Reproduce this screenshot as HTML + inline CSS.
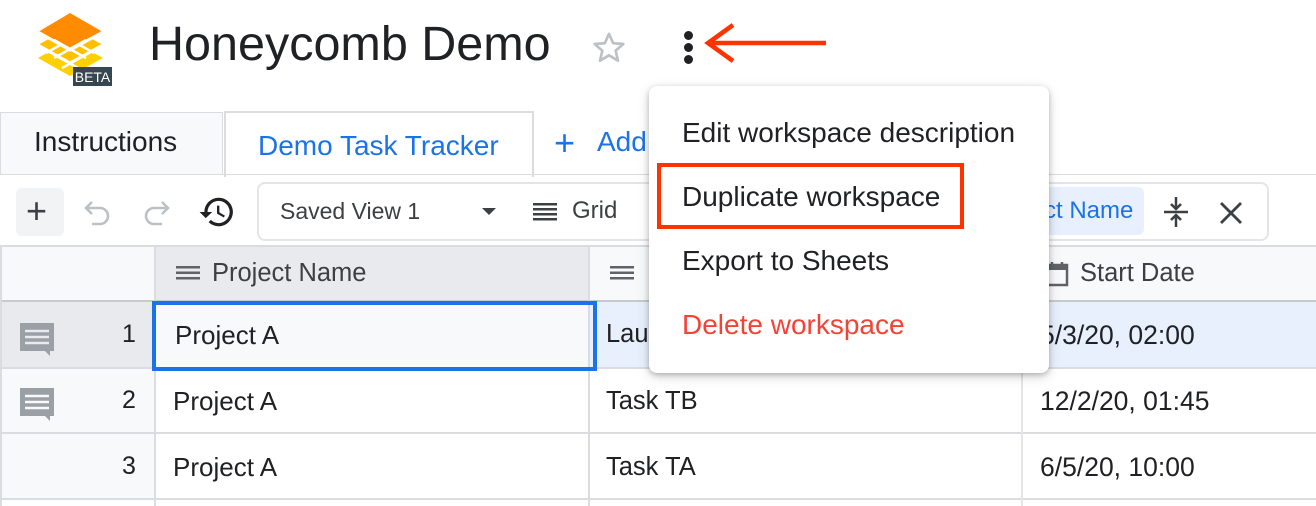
<!DOCTYPE html>
<html><head><style>
*{box-sizing:border-box;margin:0;padding:0}
body{width:1316px;height:506px;overflow:hidden;background:#fff;font-family:"Liberation Sans",Roboto,sans-serif;color:#202124;position:relative}
.a{position:absolute}
.t{white-space:nowrap}
</style></head><body>
<!-- logo -->
<svg class="a" style="left:0;top:0" width="120" height="92" viewBox="0 0 120 92">
<polygon points="38,58 70,40 103,58 70,76" fill="#ffd000"/>
<polygon points="38,45 70,27 103,45 70,63" fill="#ffc000"/>
<polygon points="38,32 70,13 103,32 70,50" fill="#ff8c00"/>
<path d="M38,32 L70,50 L103,32" fill="none" stroke="#fff" stroke-width="3"/>
<path d="M38,45 L70,63 L103,45" fill="none" stroke="#fff" stroke-width="3"/>
<path d="M54,40 L86,58 M86,40 L54,58 M46,53 L62,44 M94,53 L78,44 M46,50 L78,68 M94,50 L62,68" stroke="#fff" stroke-width="2.5"/>
<rect x="73" y="67" width="39" height="19" fill="#37474f"/>
<text x="92.5" y="82" font-size="14" fill="#fff" text-anchor="middle" font-family="Liberation Sans">BETA</text>
</svg>
<div class="a t" style="left:149px;top:16px;font-size:48.5px;color:#202124">Honeycomb Demo</div>
<svg class="a" style="left:588px;top:28px" width="42" height="40" viewBox="0 0 24 24"><path d="M12 3.5l2.5 5.6 6.1.5-4.6 4 1.4 6L12 16.4 6.6 19.6l1.4-6-4.6-4 6.1-.5z" fill="none" stroke="#bdc1c6" stroke-width="1.6" stroke-linejoin="round"/></svg>
<div class="a" style="left:684px;top:31px;width:9px;height:9px;border-radius:50%;background:#202124"></div>
<div class="a" style="left:684px;top:43px;width:9px;height:9px;border-radius:50%;background:#202124"></div>
<div class="a" style="left:684px;top:55px;width:9px;height:9px;border-radius:50%;background:#202124"></div>
<svg class="a" style="left:700px;top:18px" width="132" height="52"><path d="M8 25H126M33 7L8 25L33 43" fill="none" stroke="#ff3300" stroke-width="4.5"/></svg>
<!-- tabs -->
<div class="a" style="left:0;top:112px;width:223px;height:63px;background:#f8f9fa;border:1px solid #dadce0;border-bottom:none"></div>
<div class="a t" style="left:34px;top:126px;font-size:28px">Instructions</div>
<div class="a" style="left:224px;top:111px;width:310px;height:66px;background:#fff;border:2px solid #dadce0;border-bottom:none"></div>
<div class="a t" style="left:258px;top:130px;font-size:28px;color:#1a73e8">Demo Task Tracker</div>
<div class="a t" style="left:554px;top:122px;font-size:36px;color:#1a73e8">+</div>
<div class="a t" style="left:597px;top:126px;font-size:28px;color:#1a73e8">Add</div>
<div class="a" style="left:0;top:174px;width:1316px;height:1px;background:#dadce0"></div>
<!-- toolbar -->
<div class="a" style="left:16px;top:188px;width:48px;height:48px;border-radius:6px;background:#f1f3f4"></div>
<div class="a t" style="left:26px;top:190px;font-size:36px;color:#3c4043;font-weight:300">+</div>
<svg class="a" style="left:82px;top:198px" width="32" height="30" viewBox="0 0 32 30"><path d="M10 4L4 10L10 16M4 10H18A8 8 0 0 1 18 26H10" fill="none" stroke="#bdc1c6" stroke-width="2.6"/></svg>
<svg class="a" style="left:140px;top:198px" width="32" height="30" viewBox="0 0 32 30"><path d="M22 4L28 10L22 16M28 10H14A8 8 0 0 0 14 26H22" fill="none" stroke="#bdc1c6" stroke-width="2.6"/></svg>
<svg class="a" style="left:198px;top:193px" width="38" height="38" viewBox="0 0 24 24"><path d="M13 3a9 9 0 0 0-9 9H1l3.9 3.9L9 12H6a7 7 0 1 1 2.1 5l-1.4 1.4A9 9 0 1 0 13 3zm-1 5v5l4.3 2.5.7-1.2-3.5-2.1V8z" fill="#202124"/></svg>
<div class="a" style="left:257px;top:182px;width:1012px;height:59px;border:2px solid #e3e5e8;border-radius:8px"></div>
<div class="a t" style="left:280px;top:198px;font-size:23px;color:#3c4043">Saved View 1</div>
<div class="a" style="left:482px;top:208px;border:7px solid transparent;border-top:7px solid #3c4043"></div>
<div class="a" style="left:533px;top:203px;width:24px;height:18px;background:repeating-linear-gradient(#3c4043 0 2.5px,transparent 2.5px 5px)"></div>
<div class="a t" style="left:572px;top:197px;font-size:24px;color:#3c4043">Grid</div>
<div class="a" style="left:1040px;top:187px;width:104px;height:48px;background:#e8f0fe;border-radius:6px"></div>
<div class="a t" style="left:1044px;top:197px;font-size:24px;color:#1a73e8">ct Name</div>
<svg class="a" style="left:1162px;top:195px" width="28" height="34" viewBox="0 0 28 34"><path d="M14 2v12M9 9l5 5 5-5M2 17h24M14 32V20M9 25l5-5 5 5" fill="none" stroke="#3c4043" stroke-width="2.5"/></svg>
<svg class="a" style="left:1218px;top:200px" width="26" height="26"><path d="M3 3L23 23M23 3L3 23" stroke="#3c4043" stroke-width="2.8"/></svg>
<!-- grid -->
<div class="a" style="left:0;top:245px;width:1316px;height:2px;background:#dadce0"></div>
<div class="a" style="left:0;top:247px;width:1316px;height:53px;background:#f8f9fa"></div>
<div class="a" style="left:155px;top:247px;width:434px;height:53px;background:#e8eaed"></div>
<div class="a" style="left:0;top:300px;width:1316px;height:2px;background:#c8cacd"></div>
<div class="a" style="left:0;top:302px;width:155px;height:65px;background:#e8eaed"></div>
<div class="a" style="left:0;top:367px;width:155px;height:133px;background:#f8f9fa"></div>
<div class="a" style="left:155px;top:302px;width:434px;height:65px;background:#f8f9fa"></div>
<div class="a" style="left:589px;top:302px;width:727px;height:65px;background:#e8f0fe"></div>
<div class="a" style="left:0;top:367px;width:1316px;height:2px;background:#dadce0"></div>
<div class="a" style="left:0;top:432px;width:1316px;height:2px;background:#dadce0"></div>
<div class="a" style="left:0;top:498px;width:1316px;height:2px;background:#dadce0"></div>
<div class="a" style="left:0;top:247px;width:2px;height:259px;background:#dadce0"></div>
<div class="a" style="left:154px;top:247px;width:2px;height:259px;background:#dadce0"></div>
<div class="a" style="left:588px;top:247px;width:2px;height:259px;background:#dadce0"></div>
<div class="a" style="left:1021px;top:247px;width:2px;height:259px;background:#e3e5e8"></div>
<div class="a" style="left:176px;top:266px;width:24px;height:14px;background:repeating-linear-gradient(#5f6368 0 2.5px,transparent 2.5px 5.5px)"></div>
<div class="a t" style="left:212px;top:259px;font-size:25.5px;color:#3c4043">Project Name</div>
<div class="a" style="left:610px;top:266px;width:24px;height:14px;background:repeating-linear-gradient(#5f6368 0 2.5px,transparent 2.5px 5.5px)"></div>
<div class="a t" style="left:1080px;top:259px;font-size:25.5px;color:#3c4043">Start Date</div>
<svg class="a" style="left:1044px;top:260px" width="26" height="28"><rect x="3" y="5" width="20" height="20" fill="none" stroke="#5f6368" stroke-width="2.5"/><rect x="3" y="5" width="20" height="5" fill="#5f6368"/><path d="M8 2v5M18 2v5" stroke="#5f6368" stroke-width="2.5"/></svg>
<svg class="a" style="left:17px;top:320px" width="40" height="38" viewBox="0 0 40 38"><path d="M3 3h34v28h-4v5l-5-5H3z" fill="#9aa0a6"/><path d="M8 11h24M8 17h24M8 23h24" stroke="#e8eaed" stroke-width="2.5"/></svg>
<svg class="a" style="left:17px;top:385px" width="40" height="38" viewBox="0 0 40 38"><path d="M3 3h34v28h-4v5l-5-5H3z" fill="#9aa0a6"/><path d="M8 11h24M8 17h24M8 23h24" stroke="#f8f9fa" stroke-width="2.5"/></svg>
<div class="a t" style="left:122px;top:320px;font-size:25px">1</div>
<div class="a t" style="left:122px;top:386px;font-size:25px">2</div>
<div class="a t" style="left:122px;top:452px;font-size:25px">3</div>
<div class="a" style="left:152px;top:301px;width:445px;height:70px;border:4px solid #1a73e8"></div>
<div class="a t" style="left:175px;top:320px;font-size:26px">Project A</div>
<div class="a t" style="left:173px;top:386px;font-size:26px">Project A</div>
<div class="a t" style="left:173px;top:452px;font-size:26px">Project A</div>
<div class="a t" style="left:606px;top:320px;font-size:25.5px">Lau</div>
<div class="a t" style="left:606px;top:387px;font-size:25.5px">Task TB</div>
<div class="a t" style="left:606px;top:453px;font-size:25.5px">Task TA</div>
<div class="a t" style="left:1040px;top:320px;font-size:26.5px">5/3/20, 02:00</div>
<div class="a t" style="left:1040px;top:386px;font-size:26.5px">12/2/20, 01:45</div>
<div class="a t" style="left:1040px;top:452px;font-size:26.5px">6/5/20, 10:00</div>
<!-- menu -->
<div class="a" style="left:649px;top:86px;width:400px;height:287px;background:#fff;border-radius:8px;box-shadow:0 2px 6px rgba(0,0,0,.25),0 4px 14px rgba(0,0,0,.12)"></div>
<div class="a t" style="left:682px;top:117px;font-size:28px">Edit workspace description</div>
<div class="a t" style="left:682px;top:181px;font-size:28px">Duplicate workspace</div>
<div class="a t" style="left:682px;top:245px;font-size:28px">Export to Sheets</div>
<div class="a t" style="left:682px;top:309px;font-size:28px;color:#f44336">Delete workspace</div>
<div class="a" style="left:657px;top:163px;width:307px;height:66px;border:4px solid #ff3300"></div>
</body></html>
